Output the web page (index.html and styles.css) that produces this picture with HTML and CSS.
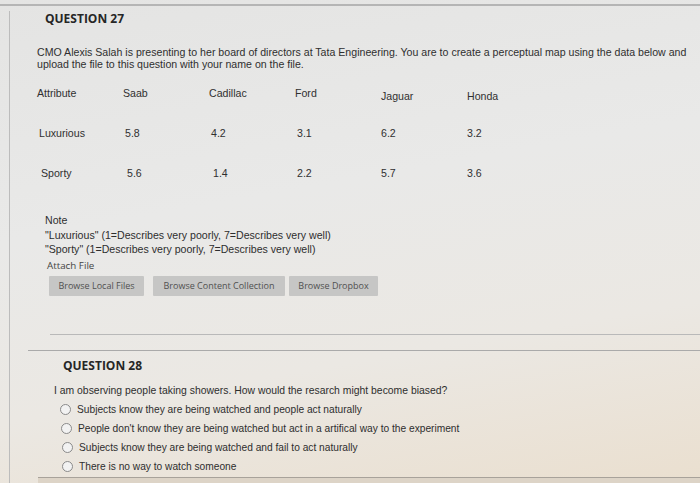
FILE: index.html
```html
<!DOCTYPE html>
<html>
<head>
<meta charset="utf-8">
<link rel="stylesheet" href="styles.css">
</head>
<body>
<div class="page">
  <div class="topline"></div>
  <div class="panel">
    <section class="q27">
      <h2 class="qtitle">QUESTION 27</h2>
      <p class="prompt">CMO Alexis Salah is presenting to her board of directors at Tata Engineering. You are to create a perceptual map using the data below and upload the file to this question with your name on the file.</p>
      <div class="table">
        <div class="cell">Attribute</div>
        <div class="cell">Saab</div>
        <div class="cell">Cadillac</div>
        <div class="cell">Ford</div>
        <div class="cell low">Jaguar</div>
        <div class="cell low">Honda</div>

        <div class="cell in1">Luxurious</div>
        <div class="cell in1">5.8</div>
        <div class="cell in1">4.2</div>
        <div class="cell in1">3.1</div>
        <div class="cell">6.2</div>
        <div class="cell">3.2</div>

        <div class="cell in2">Sporty</div>
        <div class="cell in2">5.6</div>
        <div class="cell in2">1.4</div>
        <div class="cell in1">2.2</div>
        <div class="cell">5.7</div>
        <div class="cell">3.6</div>
      </div>
      <div class="note">
        <div class="note-h">Note</div>
        <div class="note-l">"Luxurious" (1=Describes very poorly, 7=Describes very well)</div>
        <div class="note-l">"Sporty" (1=Describes very poorly, 7=Describes very well)</div>
      </div>
      <div class="attach">Attach File</div>
      <div class="buttons">
        <span class="btn b1">Browse Local Files</span>
        <span class="btn b2">Browse Content Collection</span>
        <span class="btn b3">Browse Dropbox</span>
      </div>
    </section>
    <div class="rule r1"></div>
    <div class="rule r2"></div>
    <section class="q28">
      <h2 class="qtitle t28">QUESTION 28</h2>
      <p class="ask">I am observing people taking showers. How would the resarch might become biased?</p>
      <ul class="opts">
        <li><span class="radio"></span>Subjects know they are being watched and people act naturally</li>
        <li><span class="radio"></span>People don't know they are being watched but act in a artifical way to the experiment</li>
        <li><span class="radio"></span>Subjects know they are being watched and fail to act naturally</li>
        <li><span class="radio"></span>There is no way to watch someone</li>
      </ul>
    </section>
    <div class="footbox"></div>
  </div>
</div>
</body>
</html>
```
FILE: styles.css
```css
html, body {
  margin: 0;
  padding: 0;
  width: 700px;
  height: 483px;
  overflow: hidden;
}
body {
  background: linear-gradient(170deg, #e4e4e3 0%, #e9e9e8 40%, #ebe8e3 70%, #eadfcf 100%);
  font-family: "Liberation Sans", Arial, sans-serif;
  color: #2e2e2e;
}
.page {
  position: relative;
  height: 483px;
}
.topline {
  height: 4px;
  border-bottom: 2px solid #a9a9a9;
  opacity: .8;
}
.panel {
  margin-left: 9px;
  border-left: 1px solid #bcbcbc;
  height: 477px;
  position: relative;
}
.q27 {
  padding-left: 27px;
}
.qtitle {
  font-family: "Open Sans", sans-serif;
  font-weight: 700;
  font-size: 12px;
  line-height: 16px;
  margin: 5px 0 0 8px;
  color: #262626;
}
.prompt {
  font-size: 10.6px;
  line-height: 12px;
  margin: 19px 0 0 0;
  width: 664px;
  color: #2f2f2f;
}
.table {
  display: grid;
  grid-template-columns: repeat(6, 86px);
  grid-auto-rows: 40px;
  margin-top: 17px;
  font-size: 10.6px;
  line-height: 12px;
}
.cell { color: #303030; }
.low { padding-top: 3px; }
.in1 { padding-left: 2px; }
.in2 { padding-left: 4px; }
.note {
  margin-top: 6px;
  margin-left: 8px;
  font-size: 10.6px;
  line-height: 14px;
}
.note-h { margin-bottom: 1px; }
.attach {
  font-family: "Open Sans", sans-serif;
  font-size: 9.8px;
  line-height: 13px;
  margin: 3px 0 0 10px;
  color: #444;
}
.buttons {
  display: flex;
  gap: 9px;
  margin: 4px 0 0 12px;
}
.btn {
  font-family: "Open Sans", sans-serif;
  font-size: 9px;
  line-height: 20px;
  height: 20px;
  background: #c6c6c5;
  color: #505050;
  text-align: center;
  border-radius: 1px;
}
.b1 { width: 95px; }
.b2 { width: 132px; }
.b3 { width: 89px; margin-left: -5px; }
.rule {
  height: 0;
  border-top: 1px solid #b9b9b9;
}
.r1 { margin: 38px 0 0 40px; }
.r2 { margin: 15px 0 0 18px; border-top-color: #aaa; }
.q28 {
  padding-left: 44px;
}
.t28 {
  margin: 7px 0 0 9px;
}
.ask {
  font-size: 10.4px;
  line-height: 12px;
  margin: 11px 0 0 0;
}
.opts {
  list-style: none;
  margin: 3px 0 0 6px;
  padding: 0;
  font-size: 10.2px;
}
.opts li {
  display: flex;
  align-items: center;
  height: 19px;
}
.opts li:nth-child(n+2) { padding-left: 1px; }
.opts li:nth-child(n+3) { padding-left: 2px; }
.radio {
  width: 9px;
  height: 9px;
  border: 1px solid #8a8a8a;
  border-radius: 50%;
  background: #f2f2f2;
  margin-right: 6px;
  flex: none;
}
.footbox {
  position: absolute;
  left: 28px;
  right: 0;
  bottom: 0;
  height: 10px;
  border-top: 1px solid #a8a29a;
  background: #ddd4c7;
}
```
